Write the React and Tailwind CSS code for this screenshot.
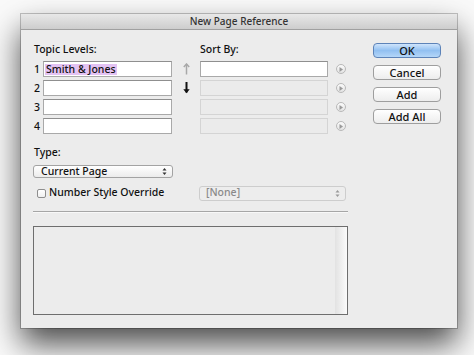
import React from "react";

const font = { fontFamily: '"Noto Sans", "DejaVu Sans", sans-serif' };

function UpArrow({ color = "#a8a8a8", w = 1.5 }) {
  return (
    <svg width="7" height="12" viewBox="0 0 7 12">
      <path d="M3.5 1 L3.5 11.5" stroke={color} strokeWidth={w} />
      <path d="M0.8 4 L3.5 1 L6.2 4" stroke={color} strokeWidth={w} fill="none" />
    </svg>
  );
}

function DownArrow() {
  return (
    <svg width="7" height="12" viewBox="0 0 7 12">
      <path d="M3.5 0 L3.5 10.5" stroke="#111" strokeWidth="2" />
      <path d="M0.3 7.3 L3.5 11.2 L6.7 7.3 Z" fill="#111" />
    </svg>
  );
}

function RoundBtn() {
  return (
    <div className="w-[10px] h-[10px] rounded-full border border-[#b9b9b9] bg-gradient-to-b from-[#fbfbfb] to-[#e3e3e3] flex items-center justify-center">
      <svg width="4" height="5" viewBox="0 0 4 5">
        <path d="M0.5 0 L4 2.5 L0.5 5 Z" fill="#9a9a9a" />
      </svg>
    </div>
  );
}

function SelectArrows({ color = "#333" }) {
  return (
    <svg width="5" height="9" viewBox="0 0 5 9">
      <path d="M0.5 3.5 L2.5 1 L4.5 3.5 Z" fill={color} />
      <path d="M0.5 5.5 L2.5 8 L4.5 5.5 Z" fill={color} />
    </svg>
  );
}

function Button({ children, primary }) {
  return (
    <div
      className={
        "h-[15px] w-[68px] rounded-[4px] border flex items-center justify-center text-[11px] font-medium leading-none text-[#111] " +
        (primary
          ? "border-[#5d83b8] bg-gradient-to-b from-[#cfe4fb] via-[#92c0f1] to-[#b4d6f8]"
          : "border-[#9e9e9e] bg-gradient-to-b from-[#ffffff] to-[#ededed]")
      }
    >
      {children}
    </div>
  );
}

function TopicField({ children }) {
  return (
    <div className="w-[129px] h-[16px] bg-white border border-[#a9a9a9] border-t-[#8f8f8f] flex items-center pl-[1px] text-[10.5px] text-[#111]">
      {children}
    </div>
  );
}

function SortField({ enabled }) {
  return enabled ? (
    <div className="w-[128px] h-[16px] bg-white border border-[#a9a9a9] border-t-[#8f8f8f]" />
  ) : (
    <div className="w-[128px] h-[16px] bg-[#ebebeb] border border-[#d4d4d4]" />
  );
}

function Row({ n, field, arrow, sortEnabled }) {
  return (
    <div className="flex items-center h-[16px]">
      <div className="w-[10px] pl-[1px] text-[10.5px] text-[#111] leading-none">{n}</div>
      {field}
      <div className="w-[28px] flex justify-center">{arrow}</div>
      <SortField enabled={sortEnabled} />
      <div className="ml-[8px]">
        <RoundBtn />
      </div>
    </div>
  );
}

export default function App() {
  return (
    <div
      className="w-[474px] h-[355px] overflow-hidden bg-[#fafafa] pl-[21px] pt-[14px] font-medium"
      style={font}
    >
      <div className="w-[436px] h-[314px] bg-[#ececec] flex flex-col shadow-[0_0_0_1px_rgba(0,0,0,0.22),0_16px_30px_rgba(0,0,0,0.7)]">
        <div className="h-[16px] shrink-0 bg-gradient-to-b from-[#e8e8e8] to-[#cdcdcd] border-b border-[#a0a0a0] flex items-center justify-center text-[10px] text-[#333]">
          New Page Reference
        </div>
        <div className="flex pl-[12px] pt-[13px]">
          <div className="w-[315px] flex flex-col text-[#111]">
            <div className="flex h-[14px] items-center text-[10.5px]">
              <div className="w-[167px] pl-[1px]">Topic Levels:</div>
              <div>Sort By:</div>
            </div>
            <div className="mt-[4px] flex flex-col gap-[3px]">
              <Row
                n="1"
                field={
                  <TopicField>
                    <span className="bg-[#e3c2f3] px-[1px] leading-[11px]">Smith &amp; Jones</span>
                  </TopicField>
                }
                arrow={<UpArrow />}
                sortEnabled
              />
              <Row n="2" field={<TopicField />} arrow={<DownArrow />} />
              <Row n="3" field={<TopicField />} />
              <Row n="4" field={<TopicField />} />
            </div>
            <div className="mt-[12px] h-[14px] flex items-center pl-[1px] text-[10.5px]">Type:</div>
            <div className="mt-[5px] w-[140px] h-[13px] rounded-[3px] border border-[#a3a3a3] bg-gradient-to-b from-[#ffffff] to-[#ececec] flex items-center justify-between pl-[7px] pr-[5px] text-[10.5px] text-[#111]">
              <span>Current Page</span>
              <SelectArrows />
            </div>
            <div className="mt-[7px] h-[16px] flex items-center">
              <div className="ml-[4px] w-[9px] h-[9px] rounded-[2px] border border-[#8e8e8e] bg-gradient-to-b from-white to-[#f0f0f0]" />
              <div className="ml-[3px] text-[10.5px] text-[#111]">Number Style Override</div>
              <div className="ml-auto mr-[2px] w-[147px] h-[15px] rounded-[3px] border border-[#cdcdcd] bg-[#ededed] flex items-center justify-between pl-[6px] pr-[5px] text-[10.5px] text-[#8a8a8a]">
                <span>[None]</span>
                <SelectArrows color="#9a9a9a" />
              </div>
            </div>
            <div className="mt-[10px] h-[1px] bg-[#a6a6a6]" />
            <div className="h-[1px] bg-[#f8f8f8]" />
            <div className="mt-[13px] h-[89px] border border-[#6e6e6e] bg-[#ececec] flex justify-end">
              <div className="w-[12px] bg-gradient-to-r from-[#e2e2e2] to-[#fbfbfb]" />
            </div>
          </div>
          <div className="ml-[25px] flex flex-col gap-[7px]">
            <Button primary>OK</Button>
            <Button>Cancel</Button>
            <Button>Add</Button>
            <Button>Add All</Button>
          </div>
        </div>
      </div>
    </div>
  );
}
